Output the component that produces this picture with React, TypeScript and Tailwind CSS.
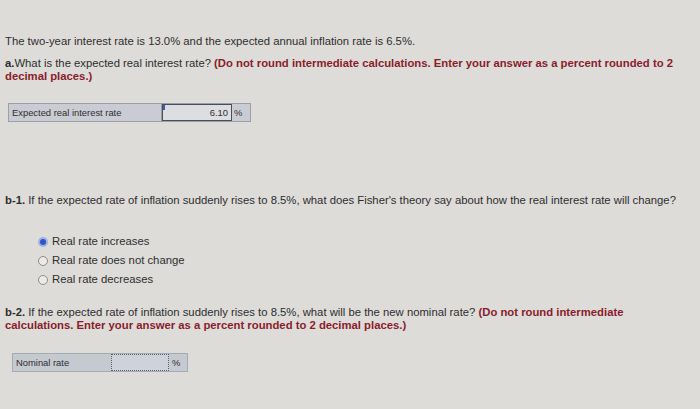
export default function App() {
  return (
    <div className="h-[409px] w-[700px] overflow-hidden bg-[#dddcd8] font-['Liberation_Sans',Arial,sans-serif] text-[11.3px] leading-[13px] text-[#2e2e30]">
      <div className="pl-[5px] pt-[35px]">
        <p>The two-year interest rate is 13.0% and the expected annual inflation rate is 6.5%.</p>

        <p className="mt-[9px] w-[672px]">
          <span className="font-bold">a.</span>What is the expected real interest rate?{" "}
          <span className="font-bold text-[#8a1c2c]">
            (Do not round intermediate calculations. Enter your answer as a percent rounded to 2 decimal places.)
          </span>
        </p>

        <div className="ml-[3px] mt-[20px] flex h-[19px] w-[243px] border border-[#9aa0a8] bg-[#c9ccd2] text-[9.4px]">
          <div className="flex w-[153px] items-center border-r border-[#9aa0a8] pl-[3px]">Expected real interest rate</div>
          <div className="relative flex w-[70px] items-center justify-end border border-[#4a4e58] bg-[#dcdee2] pr-[3px]">
            <span className="absolute left-0 top-0 h-[5px] w-[2px] bg-[#3b5bb0]" />
            6.10
          </div>
          <div className="flex flex-1 items-center pl-[2px]">%</div>
        </div>

        <p className="mt-[72px]">
          <span className="font-bold">b-1.</span> If the expected rate of inflation suddenly rises to 8.5%, what does Fisher's theory say about how the real interest rate will change?
        </p>

        <div className="ml-[33px] mt-[28px] flex flex-col gap-[6px]">
          {[
            ["Real rate increases", true],
            ["Real rate does not change", false],
            ["Real rate decreases", false],
          ].map(([label, on]) => (
            <label key={label as string} className="flex items-center gap-[4px]">
              <span
                className={
                  on
                    ? "flex h-[10px] w-[10px] items-center justify-center rounded-full bg-[#9fb2e0]"
                    : "h-[10px] w-[10px] rounded-full border border-[#8a8c90] bg-[#eceae6]"
                }
              >
                {on && <span className="h-[6px] w-[6px] rounded-full bg-[#2f56c8]" />}
              </span>
              <span>{label as string}</span>
            </label>
          ))}
        </div>

        <p className="mt-[20px] w-[635px]">
          <span className="font-bold">b-2.</span> If the expected rate of inflation suddenly rises to 8.5%, what will be the new nominal rate?{" "}
          <span className="font-bold text-[#8a1c2c]">
            (Do not round intermediate calculations. Enter your answer as a percent rounded to 2 decimal places.)
          </span>
        </p>

        <div className="ml-[7px] mt-[21px] flex h-[19px] w-[176px] border border-[#a6abb2] bg-[#c5c9d0] text-[9.4px]">
          <div className="flex w-[98px] items-center pl-[3px]">Nominal rate</div>
          <div className="w-[58px] border border-dotted border-[#5a6070] bg-[#ced2da]" />
          <div className="flex flex-1 items-center pl-[3px]">%</div>
        </div>
      </div>
    </div>
  );
}
